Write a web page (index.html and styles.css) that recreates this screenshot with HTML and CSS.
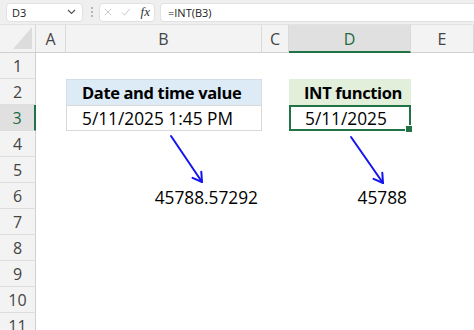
FILE: index.html
```
<!DOCTYPE html>
<html>
<head>
<meta charset="utf-8">
<link rel="stylesheet" href="styles.css">
</head>
<body>
<div class="formula-bar">
  <div class="name-box">
    <span class="name">D3</span>
    <svg class="chev" width="9" height="6" viewBox="0 0 9 6"><path d="M1 1 L4.5 4.5 L8 1" fill="none" stroke="#555" stroke-width="1.2"/></svg>
  </div>
  <svg class="dots" width="4" height="12" viewBox="0 0 4 12"><circle cx="2" cy="2" r="0.9" fill="#9a9a9a"/><circle cx="2" cy="6" r="0.9" fill="#9a9a9a"/><circle cx="2" cy="10" r="0.9" fill="#9a9a9a"/></svg>
  <div class="fx-box">
    <svg width="10" height="10" viewBox="0 0 10 10"><path d="M1 1 L9 9 M9 1 L1 9" stroke="#c4c4c4" stroke-width="1.1" fill="none"/></svg>
    <svg width="12" height="10" viewBox="0 0 12 10"><path d="M1 5.5 L4.5 9 L11 1" stroke="#c4c4c4" stroke-width="1.1" fill="none"/></svg>
    <span class="fx">fx</span>
  </div>
  <div class="formula">=INT(B3)</div>
</div>
<div class="sheet">
  <div class="corner"><svg width="19" height="22" viewBox="0 0 19 22"><path d="M19 0 L19 22 L0 22 Z" fill="#dcdcdc"/></svg></div>
  <div class="colh">A</div>
  <div class="colh">B</div>
  <div class="colh">C</div>
  <div class="colh sel">D</div>
  <div class="colh">E</div>

  <div class="rowh r1">1</div>
  <div class="rowh r2">2</div>
  <div class="rowh r3 sel">3</div>
  <div class="rowh r4">4</div>
  <div class="rowh r5">5</div>
  <div class="rowh r6">6</div>
  <div class="rowh r7">7</div>
  <div class="rowh r8">8</div>
  <div class="rowh r9">9</div>
  <div class="rowh r10">10</div>
  <div class="rowh r11">11</div>

  <div class="cell hdr-blue b2">Date and time value</div>
  <div class="cell boxed b3">5/11/2025 1:45 PM</div>
  <div class="cell hdr-green d2">INT function</div>
  <div class="cell active d3">5/11/2025</div>
  <div class="cell num b6">45788.57292</div>
  <div class="cell num d6">45788</div>

  <svg class="arrows" width="474" height="305" viewBox="0 0 474 305">
    <g fill="none" stroke="#1414f0" stroke-width="2" stroke-linecap="round" stroke-linejoin="round">
      <path d="M171 111 L202 157"/>
      <path d="M192.5 152.8 L202 157 L201.3 146.8"/>
      <path d="M351 112 L383 158"/>
      <path d="M373.5 153.8 L383 158 L382.3 147.8"/>
    </g>
  </svg>
</div>
</body>
</html>
```
FILE: styles.css
```
* { box-sizing: border-box; }
html, body { margin: 0; padding: 0; }
body {
  width: 474px;
  height: 330px;
  overflow: hidden;
  background: #ffffff;
  font-family: "Open Sans", "Noto Sans", sans-serif;
  color: #000;
}
.formula-bar {
  height: 25px;
  background: #efefef;
  display: flex;
  align-items: center;
  padding: 0 0 0 6px;
  border-bottom: 1px solid #e2e2e2;
}
.name-box {
  width: 77px;
  height: 19px;
  background: #fff;
  border: 1px solid #e1e1e1;
  border-radius: 4px;
  display: flex;
  align-items: center;
  justify-content: space-between;
  padding: 0 6px 0 5px;
}
.name {
  font-size: 11px;
  color: #222;
}
.dots { margin: 0 5px 0 7px; }
.fx-box {
  width: 56px;
  height: 19px;
  background: #fff;
  border: 1px solid #e1e1e1;
  border-radius: 4px;
  display: flex;
  align-items: center;
  gap: 9px;
  padding: 0 4px;
}
.fx {
  font-family: "Liberation Serif", "DejaVu Serif", serif;
  font-style: italic;
  font-size: 13px;
  color: #333;
  margin-left: 1px;
}
.formula {
  flex: 1;
  height: 19px;
  margin-left: 5px;
  background: #fff;
  border: 1px solid #e1e1e1;
  border-right: none;
  border-radius: 4px 0 0 4px;
  font-size: 11px;
  line-height: 17px;
  padding-left: 7px;
  color: #222;
}
.sheet {
  position: relative;
  display: grid;
  grid-template-columns: 36px 30px 196px 27px 122px 1fr;
  grid-template-rows: 28px repeat(11, 26px);
}
.corner {
  grid-column: 1;
  grid-row: 1;
  background: #f3f3f3;
  border-right: 1px solid #d8d8d8;
  border-bottom: 1px solid #d0d0d0;
  display: flex;
  align-items: flex-end;
  justify-content: flex-end;
  padding: 0 3px 3px 0;
}
.colh {
  grid-row: 1;
  background: #f3f3f3;
  border-right: 1px solid #dadada;
  border-bottom: 1px solid #d0d0d0;
  display: flex;
  align-items: center;
  justify-content: center;
  font-size: 16px;
  color: #444;
  padding-top: 1px;
}
.colh.sel {
  background: #e0e0e0;
  color: #1e6b41;
  border-bottom: 2px solid #217346;
}
.rowh {
  grid-column: 1;
  background: #f3f3f3;
  border-right: 1px solid #d0d0d0;
  border-bottom: 1px solid #dedede;
  display: flex;
  align-items: center;
  justify-content: center;
  font-size: 16px;
  color: #444;
}
.rowh.sel {
  background: #e0e0e0;
  color: #1e6b41;
  border-right: 2px solid #217346;
}
.r1 { grid-row: 2; }
.r2 { grid-row: 3; }
.r3 { grid-row: 4; }
.r4 { grid-row: 5; }
.r5 { grid-row: 6; }
.r6 { grid-row: 7; }
.r7 { grid-row: 8; }
.r8 { grid-row: 9; }
.r9 { grid-row: 10; }
.r10 { grid-row: 11; }
.r11 { grid-row: 12; }
.cell {
  display: flex;
  align-items: center;
  font-size: 17.3px;
  padding-left: 15px;
  white-space: nowrap;
}
.hdr-blue {
  background: #ddebf7;
  font-weight: 700;
  font-size: 16.5px;
  letter-spacing: -0.37px;
  border: 1px solid #d2dfea;
  border-bottom: none;
}
.hdr-green {
  background: #e2efda;
  font-weight: 700;
  font-size: 16.5px;
  letter-spacing: -0.37px;
}
.boxed {
  border: 1px solid #d9d9d9;
}
.b2 { grid-column: 3; grid-row: 3; }
.b3 { grid-column: 3; grid-row: 4; }
.d2 { grid-column: 5; grid-row: 3; }
.d3 { grid-column: 5; grid-row: 4; }
.active {
  position: relative;
  border: 2px solid #217346;
  padding-left: 14px;
}
.active::after {
  content: "";
  position: absolute;
  right: -4px;
  bottom: -4px;
  width: 6px;
  height: 6px;
  background: #217346;
  border: 1px solid #fff;
}
.num {
  justify-content: flex-end;
  padding-left: 0;
  padding-right: 4px;
  padding-top: 3px;
}
.b6 { grid-column: 3; grid-row: 7; }
.d6 { grid-column: 5; grid-row: 7; }
.arrows {
  position: absolute;
  left: 0;
  top: 0;
  pointer-events: none;
}
```
